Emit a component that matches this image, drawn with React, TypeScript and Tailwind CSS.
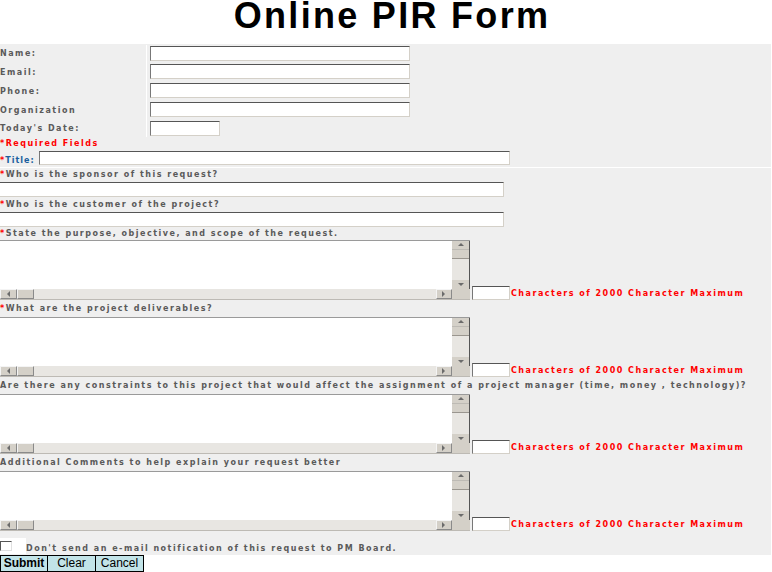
import React from 'react'

const label = "font-['DejaVu_Sans',sans-serif] text-[8px] font-bold tracking-[1.5px] text-[#5a5a5a] whitespace-nowrap"
const inset = "bg-white border border-t-[#555] border-l-[#777] border-b-[#d4d0c8] border-r-[#d4d0c8]"

const Star = () => <span className="text-[#ff0000]">*</span>

const Arrow = ({ dir }: { dir: 'up' | 'down' | 'left' | 'right' }) => {
  const pts = {
    up: '1,5 4,2 7,5',
    down: '1,2 4,5 7,2',
    left: '5,1 2,4 5,7',
    right: '2,1 5,4 2,7',
  }[dir]
  return (
    <svg width="8" height="8" viewBox="0 0 8 8">
      <polygon points={pts} fill="#6b6b6b" />
    </svg>
  )
}

const TopRow = ({ text, h, w }: { text: string; h: string; w: string }) => (
  <div className={`flex ${h}`}>
    <div className={`w-[147px] border-r border-white flex items-center ${label}`}>{text}</div>
    <div className="pl-[3px] pt-px">
      <div className={`${w} h-[15px] ${inset}`} />
    </div>
  </div>
)

const TextBlock = () => (
  <div className="flex items-end h-[60px]">
    <div className="w-[470px] h-[60px] flex flex-col border-t border-[#9a9a9a] bg-white">
      <div className="flex flex-1">
        <div className="flex-1 bg-white" />
        <div className="w-[18px] bg-[#e8e6e2] flex flex-col justify-between border-r border-[#555]">
          <div>
            <div className="h-[9px] bg-[#d4d0c8] flex items-center justify-center border-b border-[#bdbab4]">
              <Arrow dir="up" />
            </div>
            <div className="h-[9px] bg-[#d4d0c8] border-b border-[#9a968f]" />
          </div>
          <div className="h-[9px] bg-[#d4d0c8] flex items-center justify-center">
            <Arrow dir="down" />
          </div>
        </div>
      </div>
      <div className="flex h-[11px] bg-[#e8e6e2] border-b border-[#bdbab4]">
        <div className="w-[17px] bg-[#d4d0c8] border border-[#f4f4f4] border-r-[#8a8a8a] border-b-[#8a8a8a] flex items-center justify-center">
          <Arrow dir="left" />
        </div>
        <div className="w-[17px] bg-[#d4d0c8] border border-[#f4f4f4] border-r-[#8a8a8a] border-b-[#8a8a8a]" />
        <div className="flex-1" />
        <div className="w-[16px] bg-[#d4d0c8] border border-[#f4f4f4] border-r-[#8a8a8a] border-b-[#8a8a8a] flex items-center justify-center">
          <Arrow dir="right" />
        </div>
        <div className="w-[18px] bg-[#d4d0c8]" />
      </div>
    </div>
    <div className={`ml-[2px] w-[38px] h-[14px] ${inset}`} />
    <span className={`ml-[1px] mb-[1px] leading-[10px] ${label} !text-[#ff0000]`}>
      Characters of 2000 Character Maximum
    </span>
  </div>
)

export default function App() {
  return (
    <div className="w-[772px] h-[572px] bg-white">
      <h1 className="h-[44px] leading-[31px] text-center pl-[12px] font-['Liberation_Sans',Arial,sans-serif] text-[36px] font-bold tracking-[2.3px] text-black">
        Online PIR Form
      </h1>
      <div className="w-[771px] h-[511px] bg-[#efefef] flex flex-col">
        <div className="flex flex-col pt-px">
          <TopRow text="Name:" h="h-[18px]" w="w-[260px]" />
          <TopRow text="Email:" h="h-[19px]" w="w-[260px]" />
          <TopRow text="Phone:" h="h-[19px]" w="w-[260px]" />
          <TopRow text="Organization" h="h-[19px]" w="w-[260px]" />
          <TopRow text="Today's Date:" h="h-[17px]" w="w-[70px]" />
        </div>
        <div className={`h-[13px] flex items-center ${label} !text-[#ff0000]`}>*Required Fields</div>
        <div className="h-[18px] flex items-end border-b border-white pb-[2px]">
          <span className={`w-[39px] ${label} !tracking-[1px] !text-[#1a5f9e] leading-[9px]`}>
            <Star />Title:
          </span>
          <div className={`w-[471px] h-[14px] ${inset}`} />
        </div>
        <div className={`h-[14px] flex items-center ${label}`}><Star />Who is the sponsor of this request?</div>
        <div className={`w-[504px] h-[15px] ${inset} border-l-0`} />
        <div className={`h-[15px] flex items-center ${label}`}><Star />Who is the customer of the project?</div>
        <div className={`w-[504px] h-[15px] ${inset} border-l-0`} />
        <div className={`h-[13px] flex items-center ${label}`}><Star />State the purpose, objective, and scope of the request.</div>
        <TextBlock />
        <div className={`h-[17px] flex items-center ${label}`}><Star />What are the project deliverables?</div>
        <TextBlock />
        <div className={`h-[17px] flex items-center ${label}`}>
          Are there any constraints to this project that would affect the assignment of a project manager (time, money , technology)?
        </div>
        <TextBlock />
        <div className={`h-[17px] flex items-center ${label}`}>Additional Comments to help explain your request better</div>
        <TextBlock />
        <div className="flex items-end h-[20px] mt-[3px]">
          <div className="w-[26px] h-[16px] bg-white">
            <div className="mt-[3px] w-[12px] h-[10px] border border-t-[#555] border-l-[#555] border-b-[#e0e0e0] border-r-[#e0e0e0] bg-white" />
          </div>
          <span className={`${label} leading-[9px] mb-[1px]`}>Don't send an e-mail notification of this request to PM Board.</span>
        </div>
      </div>
      <div className="flex font-['Liberation_Sans',Arial,sans-serif] text-[12px] text-black">
        <button className="w-[48px] h-[17px] leading-[15px] bg-[#c2e4e8] border border-black font-bold">Submit</button>
        <button className="w-[48px] h-[17px] leading-[15px] bg-[#c2e4e8] border border-black border-l-0">Clear</button>
        <button className="w-[48px] h-[17px] leading-[15px] bg-[#c2e4e8] border border-black border-l-0">Cancel</button>
      </div>
    </div>
  )
}
